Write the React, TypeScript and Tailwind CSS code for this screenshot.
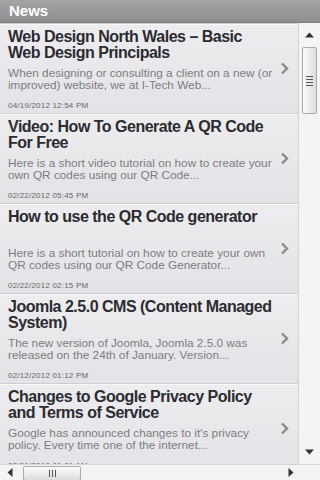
import React from "react"

type Item = {
  title: string
  desc: string
  date: string
}

const items: Item[] = [
  {
    title: "Web Design North Wales – Basic Web Design Principals",
    desc: "When designing or consulting a client on a new (or improved) website, we at I-Tech Web...",
    date: "04/19/2012 12:54 PM",
  },
  {
    title: "Video: How To Generate A QR Code For Free",
    desc: "Here is a short video tutorial on how to create your own QR codes using our QR Code...",
    date: "02/22/2012 05:45 PM",
  },
  {
    title: "How to use the QR Code generator",
    desc: "Here is a short tutorial on how to create your own QR codes using our QR Code Generator...",
    date: "02/22/2012 02:15 PM",
  },
  {
    title: "Joomla 2.5.0 CMS (Content Managed System)",
    desc: "The new version of Joomla, Joomla 2.5.0 was released on the 24th of January. Version...",
    date: "02/12/2012 01:12 PM",
  },
  {
    title: "Changes to Google Privacy Policy and Terms of Service",
    desc: "Google has announced changes to it's privacy policy. Every time one of the internet...",
    date: "02/01/2012 01:01 AM",
  },
]

const Chevron = () => (
  <svg width="9" height="13" viewBox="0 0 9 13" className="shrink-0">
    <path d="M2 1.5L7 6.5L2 11.5" stroke="#8a8a8a" strokeWidth="2.4" fill="none" />
  </svg>
)

const NewsRow = ({ item }: { item: Item }) => (
  <div className="h-[90px] shrink-0 flex items-center border-t border-t-[#cfcfd2] bg-gradient-to-b from-[#ededf0] to-[#e3e3e7] shadow-[inset_0_1px_0_#f8f8f9]">
    <div className="flex-1 min-w-0 pl-2 pr-1 h-full flex flex-col">
      <div className="h-[36px] mt-[5px] text-[16px] leading-[16px] font-bold text-[#2b2b30] tracking-[-0.5px]">
        {item.title}
      </div>
      <div className="mt-[2px] text-[11.8px] leading-[12px] text-[#7c7c80]">{item.desc}</div>
      <div className="mt-auto mb-[2px] text-[8px] leading-[10px] text-[#666] tracking-[0.2px]">{item.date}</div>
    </div>
    <div className="w-[20px] flex justify-start pl-[2px]">
      <Chevron />
    </div>
  </div>
)

export default function App() {
  return (
    <div className="w-[320px] h-[480px] overflow-hidden flex flex-col bg-[#f2f2f2] font-['Liberation_Sans',Arial,sans-serif]">
      <div className="h-[23px] shrink-0 bg-gradient-to-b from-[#a3a3a3] to-[#8f8f8f] flex items-center px-[9px] text-white font-bold text-[15px] border-b border-[#7e7e7e]">
        News
      </div>
      <div className="flex-1 min-h-0 flex">
        <div className="w-[299px] shrink-0 flex flex-col overflow-hidden border-r border-[#d4d4d6]">
          {items.map((it) => (
            <NewsRow key={it.date} item={it} />
          ))}
        </div>
        <div className="flex-1 flex flex-col items-center bg-[#f4f4f4]">
          <svg width="9" height="6" viewBox="0 0 9 6" className="mt-[9px]">
            <path d="M0 5.5L4.5 0.5L9 5.5Z" fill="#333" />
          </svg>
          <div className="mt-[9px] w-[15px] h-[67px] rounded-[2px] border border-[#a9a9ab] bg-gradient-to-r from-[#fbfbfb] to-[#dcdcde] flex flex-col items-center justify-center gap-[2px]">
            <div className="w-[7px] h-[1px] bg-[#555]" />
            <div className="w-[7px] h-[1px] bg-[#555]" />
            <div className="w-[7px] h-[1px] bg-[#555]" />
            <div className="w-[7px] h-[1px] bg-[#555]" />
          </div>
          <div className="flex-1" />
          <svg width="9" height="6" viewBox="0 0 9 6" className="mb-[9px]">
            <path d="M0 0.5L4.5 5.5L9 0.5Z" fill="#333" />
          </svg>
        </div>
      </div>
      <div className="h-[16px] shrink-0 flex items-center bg-[#f4f4f4] border-t border-[#d4d4d6]">
        <svg width="6" height="9" viewBox="0 0 6 9" className="ml-[7px]">
          <path d="M5.5 0L0.5 4.5L5.5 9Z" fill="#333" />
        </svg>
        <div className="ml-[10px] w-[58px] h-[15px] mt-[2px] rounded-[2px] border border-[#a9a9ab] bg-gradient-to-b from-[#fbfbfb] to-[#dcdcde] flex items-center justify-center gap-[2px]">
          <div className="w-[1px] h-[7px] bg-[#555]" />
          <div className="w-[1px] h-[7px] bg-[#555]" />
          <div className="w-[1px] h-[7px] bg-[#555]" />
        </div>
        <div className="flex-1" />
        <svg width="6" height="9" viewBox="0 0 6 9" className="mr-[26px]">
          <path d="M0.5 0L5.5 4.5L0.5 9Z" fill="#333" />
        </svg>
      </div>
    </div>
  )
}
